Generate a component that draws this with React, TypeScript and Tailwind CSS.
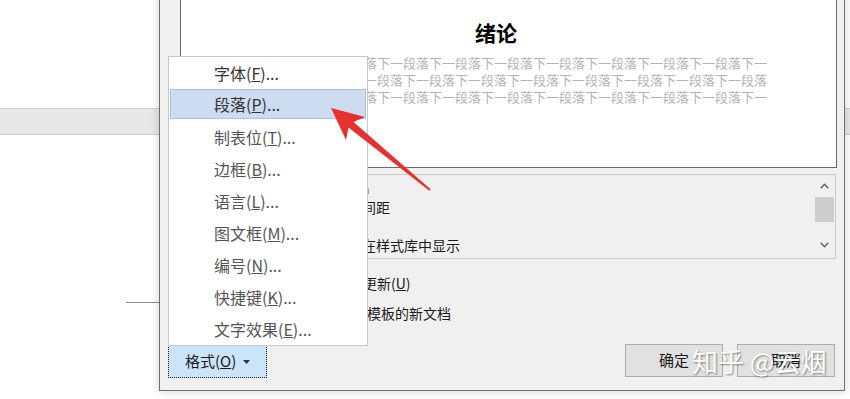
import React from "react";

const menuItems: { label: string; key: string; tail: string; active?: boolean; dark?: boolean }[] = [
  { label: "字体(", key: "F", tail: ")...", dark: true },
  { label: "段落(", key: "P", tail: ")...", active: true, dark: true },
  { label: "制表位(", key: "T", tail: ")..." },
  { label: "边框(", key: "B", tail: ")..." },
  { label: "语言(", key: "L", tail: ")..." },
  { label: "图文框(", key: "M", tail: ")..." },
  { label: "编号(", key: "N", tail: ")..." },
  { label: "快捷键(", key: "K", tail: ")..." },
  { label: "文字效果(", key: "E", tail: ")..." },
];

const line1 = "下一段落".repeat(10) + "下一";
const line2 = "段落下一".repeat(10) + "段落";

function Chevron({ up }: { up?: boolean }) {
  return (
    <svg width="9" height="6" viewBox="0 0 9 6">
      <polyline
        points={up ? "0.8,5.2 4.5,1.2 8.2,5.2" : "0.8,0.8 4.5,4.8 8.2,0.8"}
        fill="none"
        stroke="#606060"
        strokeWidth="1.4"
      />
    </svg>
  );
}

export default function App() {
  return (
    <div className="relative h-[399px] w-[850px] overflow-hidden bg-white font-['Noto_Sans_CJK_SC','Noto_Sans',sans-serif]">
      {/* desktop background */}
      <div className="flex h-full flex-col">
        <div className="h-[108px]" />
        <div className="h-[27px] border-y border-[#cfcfcf] bg-[#e7e7e7]" />
        <div className="h-[167px]" />
        <div className="ml-[126px] h-px w-[40px] bg-[#8a8a8a]" />
      </div>

      {/* dialog window */}
      <div className="absolute left-[159px] top-[-40px] flex h-[431px] w-[686px] flex-col border border-[#6e6e6e] bg-[#f0f0f0] text-[14px] text-[#1a1a1a] shadow-[0_0_9px_rgba(0,0,0,0.18)]">
        {/* preview */}
        <div className="ml-[20px] h-[207px] w-[657px] border border-[#6a6a6a] bg-white">
          <div className="ml-[40px] mt-[56px] w-[546px]">
            <div className="pl-[4px] text-center text-[21px] font-semibold leading-[28px] text-black">绪论</div>
            <div className="mt-[8px] whitespace-nowrap text-[13px] leading-[17px] text-[#b4b4b4]">
              <div>{line1}</div>
              <div>{line2}</div>
              <div>{line1}</div>
            </div>
          </div>
        </div>

        {/* description list */}
        <div className="ml-[21px] mt-[6px] flex h-[85px] w-[655px] border border-[#c9c9c9] bg-[#f0f0f0]">
          <div className="flex-1 overflow-hidden pl-[180px] pt-[4px] leading-[19px]">
            <div className="h-[19px] text-[13px]">a</div>
            <div className="h-[19px]">间距</div>
            <div className="h-[19px]" />
            <div className="h-[19px]">在样式库中显示</div>
          </div>
          <div className="mr-[1px] flex w-[19px] flex-col">
            <div className="flex h-[22px] items-center justify-center">
              <Chevron up />
            </div>
            <div className="h-[25px] bg-[#cdcdcd]" />
            <div className="flex-1" />
            <div className="mb-[2px] flex h-[22px] items-center justify-center">
              <Chevron />
            </div>
          </div>
        </div>

        {/* options */}
        <div className="ml-[203px] mt-[15px] h-[19px] leading-[19px]">
          更新(<span className="underline">U</span>)
        </div>
        <div className="ml-[207px] mt-[11px] h-[19px] leading-[19px]">模板的新文档</div>

        {/* bottom buttons */}
        <div className="mt-[21px] flex items-start text-[15px]">
          <div className="ml-[8px] mt-px flex h-[33px] w-[99px] items-center border border-dotted border-[#1a1a1a] bg-[#cce4f7] pl-[16px]">
            <span>
              格式(<span className="underline">O</span>)
            </span>
            <svg className="ml-[7px]" width="7" height="4" viewBox="0 0 7 4">
              <polygon points="0,0 7,0 3.5,4" fill="#333" />
            </svg>
          </div>
          <div className="flex-1" />
          <div className="flex h-[33px] w-[98px] items-center justify-center border border-[#adadad] bg-[#e1e1e1]">确定</div>
          <div className="ml-[14px] mr-[9px] flex h-[33px] w-[98px] items-center justify-center border border-[#adadad] bg-[#e1e1e1]">取消</div>
        </div>
      </div>

      {/* popup menu */}
      <div className="absolute left-[168px] top-[56px] w-[200px] border border-[#c8c8c8] bg-white text-[16px]">
        {menuItems.map((m) => (
          <div key={m.key} className="h-[32px] px-px">
            <div
              className={
                m.active
                  ? "flex h-[30px] items-center border border-[#a9c1e2] bg-[#cddcf1] pl-[43px]"
                  : "flex h-[32px] items-center pl-[44px]"
              }
            >
              <span className={m.dark ? "text-[#333333]" : "text-[#555555]"}>
                {m.label}
                <span className="underline">{m.key}</span>
                {m.tail}
              </span>
            </div>
          </div>
        ))}
      </div>

      {/* watermark */}
      <div className="absolute left-[692px] top-[344px] whitespace-nowrap text-[26px] leading-[34px] text-white [text-shadow:1px_1px_2px_rgba(0,0,0,0.45)]">
        知乎 @云烟
      </div>

      {/* red arrow */}
      <svg className="pointer-events-none absolute left-0 top-0" width="850" height="399" viewBox="0 0 850 399">
        <polygon
          points="331,108 365,117 353.5,122 430.6,189.2 429.4,190.8 348.5,127.5 346,140"
          fill="#e8302c"
        />
      </svg>
    </div>
  );
}
